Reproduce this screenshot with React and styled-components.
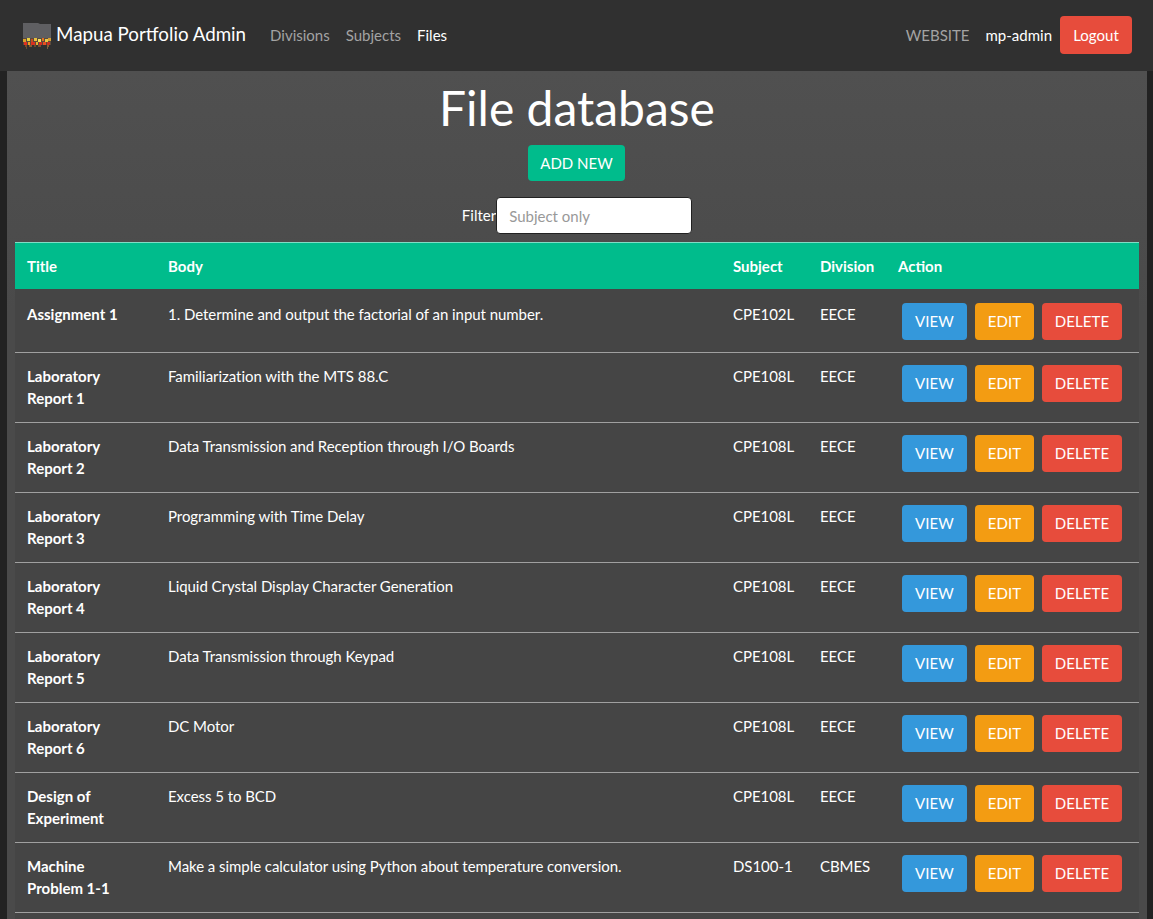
import React from 'react'
import styled, { createGlobalStyle } from 'styled-components';

const GlobalStyle = createGlobalStyle`
  * {
    box-sizing: border-box;
  }

  html, body {
    margin: 0;
    height: 100%;
    overflow: hidden;
    background: #222222;
    color: #ffffff;
    font-family: Lato, "Liberation Sans", sans-serif;
    font-size: 15px;
    line-height: 1.42857;
  }
`;

const Page = styled.div`
  height: 100vh;
  overflow: hidden;
`;

const Navbar = styled.nav`
  height: 71px;
  background: #303030;
  display: flex;
  align-items: center;
  justify-content: space-between;
  padding: 0 21px 0 23px;
`;

const NavSide = styled.div`
  display: flex;
  align-items: center;
`;

const Brand = styled.a`
  display: flex;
  align-items: center;
  gap: 5px;
  font-size: 18.75px;
  color: #ffffff;
  margin-right: 24px;
`;

const BrandText = styled.span`
  padding-bottom: 3px;
`;

const NavLink = styled.a`
  font-size: 15px;
  color: ${(p) => (p.$active ? '#ffffff' : '#a3a3a3')};
  margin-right: ${(p) => p.$gap || 16}px;
`;

const Logout = styled.button`
  height: 38px;
  width: 72px;
  margin-bottom: 1px;
  padding: 1px 0 0;
  border: 0;
  border-radius: 4px;
  background: #e74c3c;
  color: #ffffff;
  font: inherit;
`;

const Container = styled.main`
  margin: 0 6px 0 7px;
  padding: 0 8px;
  background: linear-gradient(#505050, #4a4a4a 240px);
  min-height: 848px;
`;

const Heading = styled.h1`
  margin: 0;
  padding-top: 4px;
  font-size: 48px;
  font-weight: 400;
  line-height: 65px;
  text-align: center;
`;

const Center = styled.div`
  display: flex;
  justify-content: center;
  align-items: center;
`;

const AddButton = styled.button`
  height: 36px;
  width: 97px;
  margin: 5px 1px 0 0;
  padding: 1px 0 0;
  border: 0;
  border-radius: 4px;
  background: #00bc8c;
  color: #ffffff;
  font: inherit;
`;

const FilterRow = styled(Center)`
  margin-top: 16px;
  margin-bottom: 8px;
`;

const FilterInput = styled.input`
  width: 196px;
  height: 37px;
  padding: 0 12px;
  border: 1px solid #222222;
  border-radius: 4px;
  background: #ffffff;
  font: inherit;
  color: #333333;

  &::placeholder {
    color: #999999;
    opacity: 1;
  }
`;

const Table = styled.table`
  width: 1124px;
  table-layout: fixed;
  border-collapse: collapse;
  background: #454545;
`;

const Head = styled.th`
  height: 46px;
  padding: 1px 12px 0;
  background: #00bc8c;
  border-top: 1px solid #7fddc5;
  text-align: left;
  font-weight: 700;
  width: ${(p) => p.$w}px;
`;

const Row = styled.tr`
  border-bottom: 1px solid #a0a0a0;

  &:first-child td {
    padding-top: 14px;
    padding-bottom: 12px;
  }
`;

const Cell = styled.td`
  padding: 12px 12px 13px;
  vertical-align: top;
  line-height: 22px;
  letter-spacing: -0.05px;
`;

const TitleCell = styled(Cell)`
  padding-right: 30px;
  font-weight: 700;
  letter-spacing: 0;
`;

const Actions = styled.div`
  display: flex;
  gap: 8px;
  padding-left: 4px;
`;

const ActionButton = styled.button`
  height: 37px;
  padding: 0;
  width: ${(p) => p.$w}px;
  border: 0;
  border-radius: 4px;
  background: ${(p) => p.$bg};
  color: #ffffff;
  font: inherit;
  letter-spacing: 0.1px;
`;

const Filler = styled.td`
  height: 60px;
`;

const specks = [
  [0, 16, 3, '#d9a02a'], [4, 15, 3, '#e8d040'], [8, 16, 2, '#c84a20'], [11, 15, 3, '#e8c040'],
  [15, 16, 3, '#f0e060'], [19, 15, 2, '#e07020'], [22, 16, 3, '#e8c848'], [25, 15, 3, '#d8a030'],
  [1, 19, 3, '#e03020'], [5, 19, 2, '#f0a020'], [8, 19, 4, '#d83020'], [13, 19, 2, '#e8b030'],
  [16, 19, 3, '#d02820'], [20, 19, 3, '#e85020'], [24, 19, 3, '#c83020'],
  [2, 22, 2, '#7a4a28'], [6, 22, 3, '#8a5a30'], [11, 22, 2, '#6a4a30'], [15, 22, 3, '#7a5030'], [24, 22, 2, '#8a6030'],
];

const Logo = () => (
  <svg width="28" height="26" viewBox="0 0 28 26">
    <path d="M0 0h15l2 1h11v15H0z" fill="#5f5f62" />
    <rect y="15" width="28" height="7" fill="#5a4a3e" />
    {specks.map(([x, y, w, c]) => (
      <rect key={x + '-' + y} x={x} y={y} width={w} height={y === 22 ? 2 : 3} fill={c} />
    ))}
    <rect x="3" y="24" width="1" height="2" fill="#6a5030" />
    <rect x="24" y="24" width="1" height="2" fill="#806040" />
  </svg>
);

const rows = [
  ['Assignment 1', '1. Determine and output the factorial of an input number.', 'CPE102L', 'EECE'],
  ['Laboratory Report 1', 'Familiarization with the MTS 88.C', 'CPE108L', 'EECE'],
  ['Laboratory Report 2', 'Data Transmission and Reception through I/O Boards', 'CPE108L', 'EECE'],
  ['Laboratory Report 3', 'Programming with Time Delay', 'CPE108L', 'EECE'],
  ['Laboratory Report 4', 'Liquid Crystal Display Character Generation', 'CPE108L', 'EECE'],
  ['Laboratory Report 5', 'Data Transmission through Keypad', 'CPE108L', 'EECE'],
  ['Laboratory Report 6', 'DC Motor', 'CPE108L', 'EECE'],
  ['Design of Experiment', 'Excess 5 to BCD', 'CPE108L', 'EECE'],
  ['Machine Problem 1-1', 'Make a simple calculator using Python about temperature conversion.', 'DS100-1', 'CBMES'],
];

export default function App() {
  return (
    <Page>
      <GlobalStyle />
      <Navbar>
        <NavSide>
          <Brand><Logo /><BrandText>Mapua Portfolio Admin</BrandText></Brand>
          <NavLink>Divisions</NavLink>
          <NavLink>Subjects</NavLink>
          <NavLink $active>Files</NavLink>
        </NavSide>
        <NavSide>
          <NavLink>WEBSITE</NavLink>
          <NavLink $active $gap={8}>mp-admin</NavLink>
          <Logout>Logout</Logout>
        </NavSide>
      </Navbar>
      <Container>
        <Heading>File database</Heading>
        <Center><AddButton>ADD NEW</AddButton></Center>
        <FilterRow>
          <span>Filter</span>
          <FilterInput placeholder="Subject only" />
        </FilterRow>
        <Table>
          <thead>
            <tr>
              <Head $w={141}>Title</Head>
              <Head $w={565}>Body</Head>
              <Head $w={87}>Subject</Head>
              <Head $w={78}>Division</Head>
              <Head>Action</Head>
            </tr>
          </thead>
          <tbody>
            {rows.map((row) => (
              <Row key={row[0]}>
                <TitleCell>{row[0]}</TitleCell>
                <Cell>{row[1]}</Cell>
                <Cell>{row[2]}</Cell>
                <Cell>{row[3]}</Cell>
                <Cell>
                  <Actions>
                    <ActionButton $w={65} $bg="#3498db">VIEW</ActionButton>
                    <ActionButton $w={59} $bg="#f39c12">EDIT</ActionButton>
                    <ActionButton $w={80} $bg="#e74c3c">DELETE</ActionButton>
                  </Actions>
                </Cell>
              </Row>
            ))}
            <tr><Filler colSpan={5} /></tr>
          </tbody>
        </Table>
      </Container>
    </Page>
  )
}
